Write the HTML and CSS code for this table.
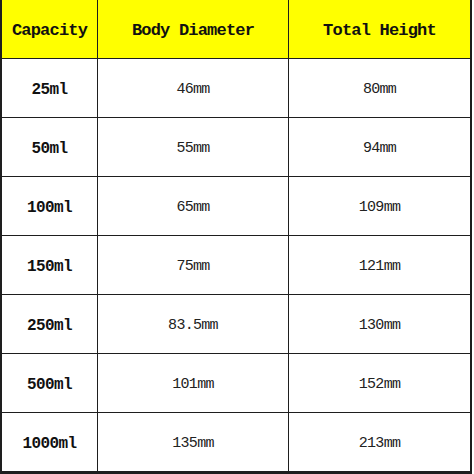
FILE: index.html
```html
<!DOCTYPE html>
<html>
<head>
<meta charset="utf-8">
<link rel="stylesheet" href="styles.css">
</head>
<body>
<div class="table">
  <div class="cell head">Capacity</div>
  <div class="cell head">Body Diameter</div>
  <div class="cell head">Total Height</div>

  <div class="cell cap">25ml</div><div class="cell">46mm</div><div class="cell">80mm</div>
  <div class="cell cap">50ml</div><div class="cell">55mm</div><div class="cell">94mm</div>
  <div class="cell cap">100ml</div><div class="cell">65mm</div><div class="cell">109mm</div>
  <div class="cell cap">150ml</div><div class="cell">75mm</div><div class="cell">121mm</div>
  <div class="cell cap">250ml</div><div class="cell">83.5mm</div><div class="cell">130mm</div>
  <div class="cell cap">500ml</div><div class="cell">101mm</div><div class="cell">152mm</div>
  <div class="cell cap">1000ml</div><div class="cell">135mm</div><div class="cell">213mm</div>
</div>
</body>
</html>
```
FILE: styles.css
```css
html, body {
  margin: 0;
  padding: 0;
  background: #ffffff;
}
.table {
  display: grid;
  grid-template-columns: 95px 190px 181px;
  grid-template-rows: repeat(8, 58px);
  gap: 1px;
  background: #1e1e1e;
  padding: 0 2px 3px 2px;
  width: 468px;
  font-family: "Liberation Mono", "Courier New", monospace;
  color: #111;
}
.cell {
  background: #ffffff;
  display: flex;
  align-items: center;
  justify-content: center;
  padding-top: 3px;
  font-size: 15px;
  letter-spacing: -0.7px;
  color: #222;
}
.head {
  background: #ffff00;
  font-weight: bold;
  font-size: 17px;
  letter-spacing: -0.8px;
  color: #111;
}
.cap {
  font-weight: bold;
  font-size: 16px;
  letter-spacing: -0.6px;
  color: #111;
}
```
